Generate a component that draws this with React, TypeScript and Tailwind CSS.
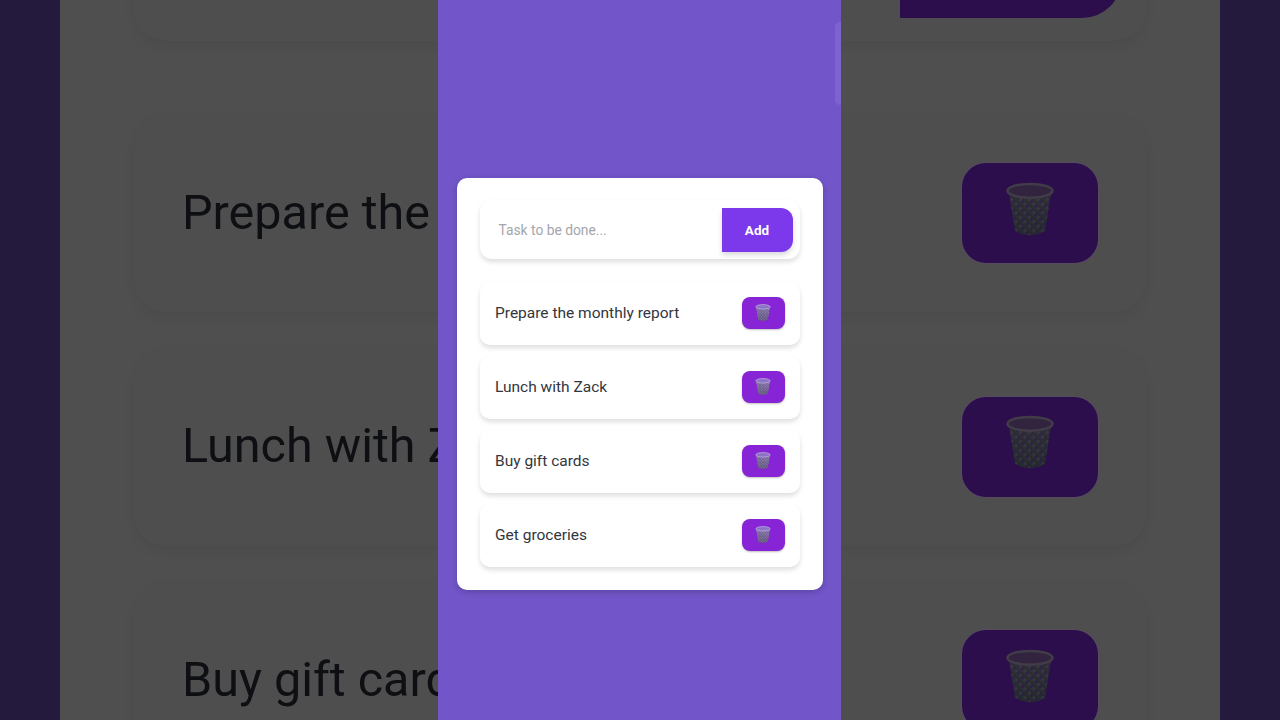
import React from "react";

const font = { fontFamily: "Roboto, sans-serif" };

function Bin({ id, size, dark }: { id: string; size: number; dark?: boolean }) {
  const top = dark ? "#413c48" : "#b9a8dc";
  const bottom = dark ? "#1c2725" : "#3f4150";
  return (
    <svg width={size} height={size * 1.1} viewBox="0 0 40 44" className="block">
      <defs>
        <linearGradient id={`${id}g`} x1="0" y1="0" x2="0" y2="1">
          <stop offset="0" stopColor={top} />
          <stop offset="1" stopColor={bottom} />
        </linearGradient>
        <pattern id={`${id}p`} width="5" height="5" patternUnits="userSpaceOnUse" patternTransform="rotate(45)">
          <rect width="5" height="5" fill={`url(#${id}g)`} />
          <rect width="2.5" height="2.5" fill={dark ? "#2c0e4c" : "#7a3fc0"} opacity="0.7" />
        </pattern>
      </defs>
      <path d="M3 7 L8 39 Q20 46 32 39 L37 7 Z" fill={`url(#${id}g)`} />
      <path d="M3 7 L8 39 Q20 46 32 39 L37 7 Z" fill={`url(#${id}p)`} opacity="0.75" />
      <ellipse cx="20" cy="7" rx="18" ry="5.5" fill={dark ? "#32243f" : "#8d72c8"} stroke={top} strokeWidth="2" />
    </svg>
  );
}

function BgRow({ label, id }: { label: string; id: string }) {
  return (
    <div className="flex h-[198px] w-[1012px] shrink-0 items-center justify-between rounded-[32px] bg-[#4e4e4e] pl-[48px] pr-[48px] shadow-[0_6px_12px_rgba(0,0,0,0.05)]">
      <span className="whitespace-nowrap text-[48.5px] leading-none text-[#0e0f12] blur-[0.6px]">{label}</span>
      <div className="flex h-[100px] w-[136px] items-center justify-center rounded-[24px] bg-[#2c0e4c] pb-[8px] shadow-[0_0_2px_rgba(120,70,160,0.6)]">
        <div className="blur-[0.5px]">
          <Bin id={id} size={50} dark />
        </div>
      </div>
    </div>
  );
}

function Row({ label, id }: { label: string; id: string }) {
  return (
    <div className="flex h-[63px] items-center justify-between rounded-[10px] bg-white pl-[15.5px] pr-[15px] shadow-[0_3px_5px_rgba(0,0,0,0.13)]">
      <span className="text-[15.5px] text-[#33363d]">{label}</span>
      <div className="-mt-px flex h-[32px] w-[43px] items-center justify-center rounded-[8px] bg-[#8724d6] shadow-[0_1px_2px_rgba(0,0,0,0.25)]">
        <Bin id={id} size={16} />
      </div>
    </div>
  );
}

export default function App() {
  return (
    <div style={font} className="grid h-[720px] w-[1280px] overflow-hidden bg-[#231a3e]">
      <div className="mx-[60px] flex h-[720px] w-[1160px] flex-col items-center gap-[35.5px] overflow-hidden bg-[#4f4f4f] [grid-area:1/1]">
        <div className="-mt-[146px] mb-[37.5px] flex h-[187px] w-[1012px] shrink-0 items-end justify-end rounded-[32px] bg-[#4e4e4e] pb-[23px] pr-[24px] shadow-[0_6px_12px_rgba(0,0,0,0.05)]">
          <div className="h-[140px] w-[222px] rounded-r-[40px] bg-[#2c0e4c]" />
        </div>
        <BgRow label="Prepare the monthly report" id="a" />
        <BgRow label="Lunch with Zack" id="b" />
        <BgRow label="Buy gift cards" id="c" />
      </div>

      <div className="relative z-10 ml-[438px] flex h-[720px] w-[403px] items-start justify-center bg-[#7256c9] pt-[178px] [grid-area:1/1]">
        <div className="absolute right-0 top-[22px] h-[83px] w-[6px] rounded-l-[5px] bg-[#7d63cf]" />
        <div className="flex h-[412px] w-[366px] flex-col rounded-[10px] bg-white px-[23px] pt-[22px] shadow-[0_2px_6px_rgba(0,0,0,0.2)]">
          <div className="flex h-[59px] items-center justify-between rounded-[12px] bg-white pl-[19px] pr-[7px] shadow-[0_3px_5px_rgba(0,0,0,0.13)]">
            <span className="pt-px text-[13.8px] text-[#a3a6ad]">Task to be done...</span>
            <div className="flex h-[44px] w-[71px] items-center justify-center rounded-r-[12px] bg-[#7c38eb] pt-px text-[13.5px] font-bold text-white shadow-[0_3px_5px_rgba(0,0,0,0.15)]">
              Add
            </div>
          </div>
          <div className="mt-[23px] flex flex-col gap-[11px]">
            <Row label="Prepare the monthly report" id="d" />
            <Row label="Lunch with Zack" id="e" />
            <Row label="Buy gift cards" id="f" />
            <Row label="Get groceries" id="h" />
          </div>
        </div>
      </div>
    </div>
  );
}
